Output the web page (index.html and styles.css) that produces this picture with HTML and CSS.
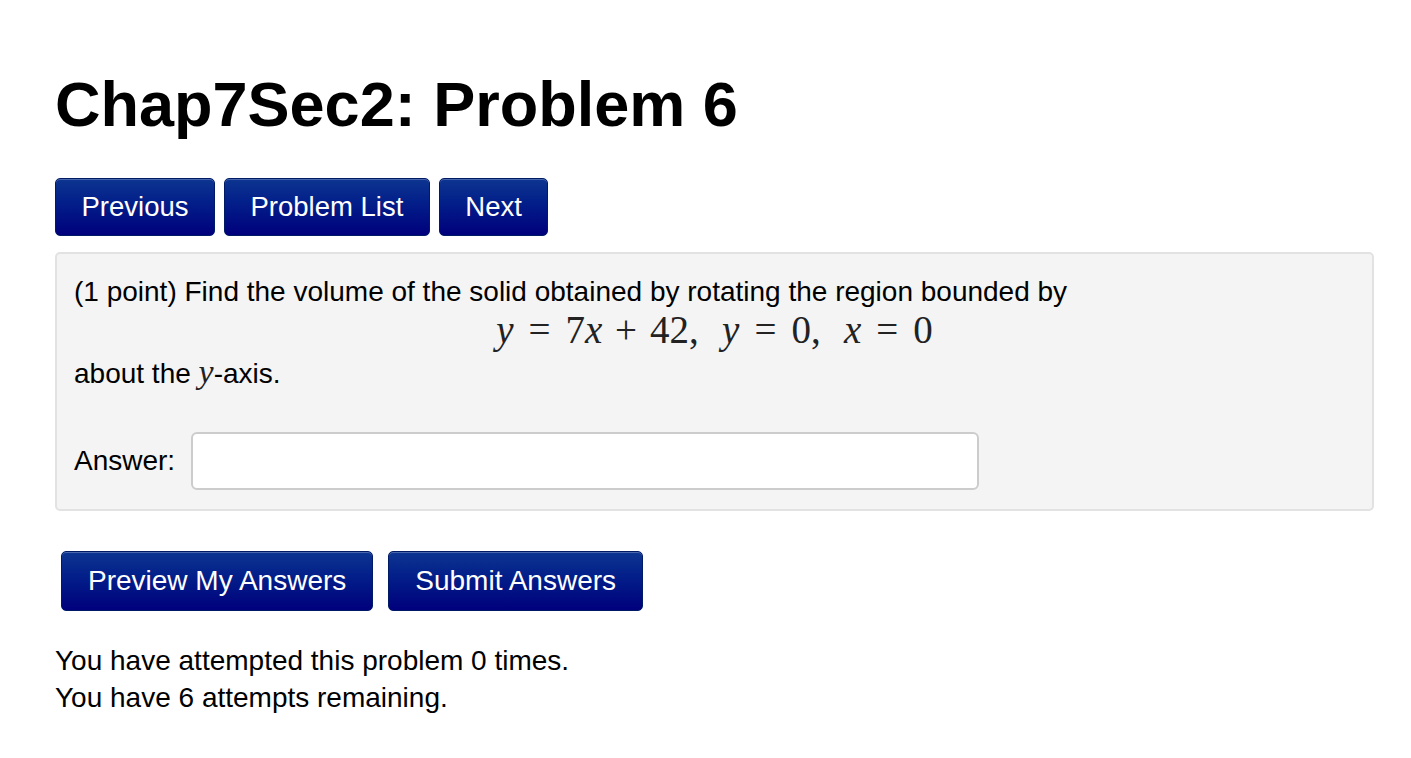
FILE: index.html
```html
<!DOCTYPE html>
<html lang="en">
<head>
  <meta charset="UTF-8">
  <title>Chap7Sec2: Problem 6</title>
  <link rel="stylesheet" href="styles.css">
</head>
<body>
  <h1 class="title">Chap7Sec2: Problem 6</h1>

  <div class="nav">
    <a class="button" href="#">Previous</a>
    <a class="button" href="#">Problem List</a>
    <a class="button" href="#">Next</a>
  </div>

  <div class="problem">
    <p class="line">(1 point) Find the volume of the solid obtained by rotating the region bounded by</p>
    <div class="math-display">
      <span class="mi">y</span><span class="mo rel">=</span><span class="mn">7</span><span class="mi">x</span><span class="mo bin">+</span><span class="mn">42</span><span class="punct">,</span><span class="mi">y</span><span class="mo rel">=</span><span class="mn">0</span><span class="punct">,</span><span class="mi">x</span><span class="mo rel">=</span><span class="mn">0</span>
    </div>
    <p class="line about">about the <span class="mi inline">y</span>-axis.</p>

    <div class="answer-row">
      <label for="answer">Answer:</label>
      <input type="text" id="answer">
    </div>
  </div>

  <div class="actions">
    <button class="button">Preview My Answers</button>
    <button class="button">Submit Answers</button>
  </div>

  <div class="attempts">
    <p>You have attempted this problem 0 times.</p>
    <p>You have 6 attempts remaining.</p>
  </div>
</body>
</html>
```

FILE: styles.css
```css
body {
  font-family: Helvetica, "Liberation Sans", Arial, sans-serif;
  margin: 0;
  padding: 0 37px 0 55px;
  background-color: #ffffff;
  color: #000000;
}

.title {
  font-size: 63px;
  font-weight: bold;
  margin: 68px 0 0 0;
  line-height: 72px;
}

.nav {
  display: flex;
  gap: 9px;
  margin-top: 38px;
}

.button {
  display: inline-block;
  font-family: inherit;
  font-size: 27.5px;
  line-height: 56px;
  height: 58px;
  box-sizing: border-box;
  padding: 0 25.5px;
  color: #ffffff;
  text-decoration: none;
  background: linear-gradient(to bottom, #0d3590 0%, #03208a 40%, #00007c 100%);
  border: 1px solid #001a66;
  border-radius: 5px;
  box-shadow: inset 0 1px 0 rgba(255, 255, 255, 0.25);
  cursor: pointer;
}

.problem {
  margin-top: 16px;
  background-color: #f4f4f4;
  border: 2px solid #e2e2e2;
  border-radius: 5px;
  padding: 20px 17px 19px 17px;
}

.line {
  font-size: 28px;
  margin: 0;
  line-height: 36px;
}

.about {
  margin-top: 4px;
}

.math-display {
  text-align: center;
  font-family: "Liberation Serif", "DejaVu Serif", serif;
  font-size: 39px;
  color: #222222;
  line-height: 40px;
  white-space: nowrap;
}

.mi {
  font-style: italic;
  font-family: "Liberation Serif", "DejaVu Serif", serif;
}

.mi.inline {
  font-size: 34px;
  color: #222222;
}

.mo {
  display: inline-block;
  width: 0.778em;
  text-align: center;
}

.mo.rel {
  margin: 0 0.278em;
}

.mo.bin {
  margin: 0 0.222em;
}

.punct {
  margin-right: 0.6em;
}

.answer-row {
  display: flex;
  align-items: center;
  margin-top: 40px;
  gap: 16px;
}

.answer-row label {
  font-size: 28px;
}

.answer-row input {
  width: 788px;
  height: 58px;
  box-sizing: border-box;
  border: 2px solid #cccccc;
  border-radius: 6px;
  background-color: #ffffff;
  font-size: 24px;
  padding: 0 10px;
}

.actions {
  display: flex;
  gap: 15px;
  margin: 40px 0 0 6px;
}

.actions .button {
  font-size: 28px;
  padding: 0 26px;
  height: 60px;
  line-height: 58px;
}

.attempts {
  margin-top: 31px;
}

.attempts p {
  margin: 0;
  font-size: 28px;
  line-height: 37px;
}
```
